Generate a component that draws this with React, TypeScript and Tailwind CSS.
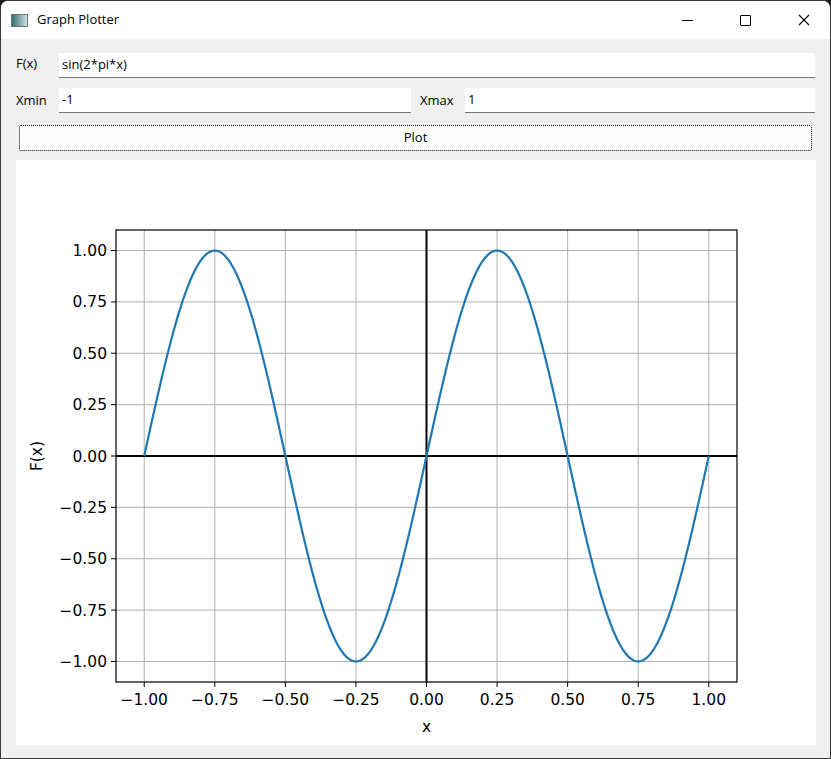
import React from "react";

const X0 = 100, X1 = 721, Y0 = 70, Y1 = 522;
const sx = (x: number) => X0 + ((x + 1.1) / 2.2) * (X1 - X0);
const sy = (y: number) => Y1 - ((y + 1.1) / 2.2) * (Y1 - Y0);

function Chart() {
  const pts: string[] = [];
  for (let i = 0; i <= 400; i++) {
    const x = -1 + (2 * i) / 400;
    pts.push(`${sx(x).toFixed(2)},${sy(Math.sin(2 * Math.PI * x)).toFixed(2)}`);
  }
  const xt = [-1, -0.75, -0.5, -0.25, 0, 0.25, 0.5, 0.75, 1];
  const yt = [1, 0.75, 0.5, 0.25, 0, -0.25, -0.5, -0.75, -1];
  const fmt = (v: number) => (v < 0 ? "\u2212" : "") + Math.abs(v).toFixed(2);
  return (
    <svg width="800" height="585" style={{ fontFamily: "'DejaVu Sans', sans-serif" }}>
      {xt.map((v) => (
        <line key={"gx" + v} x1={sx(v)} x2={sx(v)} y1={Y0} y2={Y1} stroke="#b0b0b0" strokeWidth="1" />
      ))}
      {yt.map((v) => (
        <line key={"gy" + v} x1={X0} x2={X1} y1={sy(v)} y2={sy(v)} stroke="#b0b0b0" strokeWidth="1" />
      ))}
      <line x1={X0} x2={X1} y1={sy(0)} y2={sy(0)} stroke="#000" strokeWidth="2" />
      <line x1={sx(0)} x2={sx(0)} y1={Y0} y2={Y1} stroke="#000" strokeWidth="2" />
      <polyline points={pts.join(" ")} fill="none" stroke="#1f77b4" strokeWidth="2.2" />
      <rect x={X0} y={Y0} width={X1 - X0} height={Y1 - Y0} fill="none" stroke="#000" strokeWidth="1.2" />
      {xt.map((v) => (
        <g key={"tx" + v}>
          <line x1={sx(v)} x2={sx(v)} y1={Y1} y2={Y1 + 5} stroke="#000" />
          <text x={sx(v)} y={Y1 + 23} fontSize="15.5" textAnchor="middle" fill="#000">{fmt(v)}</text>
        </g>
      ))}
      {yt.map((v) => (
        <g key={"ty" + v}>
          <line x1={X0 - 5} x2={X0} y1={sy(v)} y2={sy(v)} stroke="#000" />
          <text x={X0 - 9} y={sy(v) + 5.5} fontSize="15.5" textAnchor="end" fill="#000">{fmt(v)}</text>
        </g>
      ))}
      <text x={sx(0)} y={Y1 + 50} fontSize="15.5" textAnchor="middle" fill="#000">x</text>
      <text x={0} y={0} fontSize="15.5" textAnchor="middle" fill="#000" transform={`translate(26 ${sy(0)}) rotate(-90)`}>F(x)</text>
    </svg>
  );
}

export default function App() {
  return (
    <div className="w-[831px] h-[759px] bg-[#1c1c1c] overflow-hidden" style={{ fontFamily: "'Open Sans', 'Noto Sans', sans-serif" }}>
      <div className="w-full h-full bg-[#f0f0f0] rounded-t-[8px] border border-[#3a3a3a] flex flex-col overflow-hidden">
        <div className="h-[38px] bg-white flex items-center pl-[10px] shrink-0">
          <div className="w-[17px] h-[13px] border border-[#777] bg-gradient-to-r from-[#2f6f6f] to-[#cfe3e3] mr-[9px]" />
          <span className="text-[13px] text-black">Graph Plotter</span>
          <div className="ml-auto flex items-center h-full">
            <div className="w-[50px] flex justify-center"><div className="w-[11px] h-px bg-black" /></div>
            <div className="w-[66px] flex justify-center"><div className="w-[11px] h-[11px] border border-black rounded-[1px]" /></div>
            <div className="w-[52px] flex justify-center">
              <svg width="12" height="12"><path d="M1 1L11 11M11 1L1 11" stroke="#000" strokeWidth="1.1" /></svg>
            </div>
          </div>
        </div>
        <div className="px-[15px] pt-[14px] flex flex-col text-[13px] text-black">
          <div className="flex items-center h-[25px]">
            <span className="w-[43px] -mt-[4px]">F(x)</span>
            <div className="flex-1 h-[25px] bg-white border-b border-[#777] flex items-center pl-[3px]">sin(2*pi*x)</div>
          </div>
          <div className="flex items-center h-[25px] mt-[10px]">
            <span className="w-[43px]">Xmin</span>
            <div className="w-[352px] h-[25px] bg-white border-b border-[#777] flex items-center pl-[3px]">-1</div>
            <span className="w-[45px] ml-[9px]">Xmax</span>
            <div className="flex-1 h-[25px] bg-white border-b border-[#777] flex items-center pl-[3px]">1</div>
          </div>
          <div className="mt-[12px] mx-[3px] h-[26px] bg-[#fdfdfd] border border-dotted border-black rounded-[2px] flex items-center justify-center">Plot</div>
        </div>
        <div className="mx-[15px] mt-[9px] w-[800px] h-[585px] bg-white">
          <Chart />
        </div>
      </div>
    </div>
  );
}
